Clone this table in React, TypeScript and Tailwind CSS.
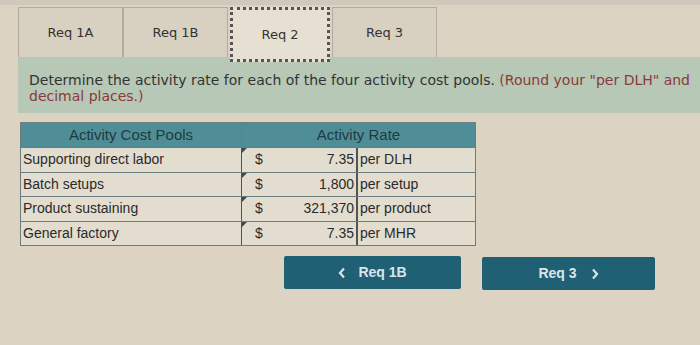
import React from "react";

const rows = [
  { pool: "Supporting direct labor", rate: "7.35", unit: "per DLH" },
  { pool: "Batch setups", rate: "1,800", unit: "per setup" },
  { pool: "Product sustaining", rate: "321,370", unit: "per product" },
  { pool: "General factory", rate: "7.35", unit: "per MHR" },
];

const tabs = [
  { label: "Req 1A", active: false },
  { label: "Req 1B", active: false },
  { label: "Req 2", active: true },
  { label: "Req 3", active: false },
];

export default function App() {
  return (
    <div className="w-[700px] h-[345px] overflow-hidden bg-[#dcd3c3] relative" style={{ fontFamily: "'DejaVu Sans', sans-serif" }}>
      <div className="h-[5px] bg-[#cfc8bb]" />
      {/* Tabs */}
      <div className="flex items-end pl-[18px] h-[52px]">
        {tabs.map((t) =>
          t.active ? (
            <div
              key={t.label}
              className="w-[100px] h-[55px] mx-[2px] self-start mt-[2px] bg-[#e6e0d3] border-[3px] border-dotted border-[#555] flex items-center justify-center text-[13px] text-[#333]"
            >
              {t.label}
            </div>
          ) : (
            <div
              key={t.label}
              className="w-[105px] h-[50px] bg-[#d8d0c1] border border-[#b3ab9d] border-b-0 flex items-center justify-center text-[13px] text-[#333]"
            >
              {t.label}
            </div>
          )
        )}
      </div>
      {/* Instructions */}
      <div className="ml-[18px] h-[56px] bg-[#b7c8b6] pl-[11px] pt-[15px] text-[14px] leading-[16px] text-[#333] whitespace-nowrap">
        Determine the activity rate for each of the four activity cost pools.{" "}
        <span className="text-[#8a3a3a]">(Round your "per DLH" and</span>
        <br />
        <span className="text-[#8a3a3a]">decimal places.)</span>
      </div>
      {/* Table */}
      <div className="mt-[9px] ml-[20px] w-[456px] border border-[#6d7c7e]" style={{ fontFamily: "'Liberation Sans', Arial, sans-serif" }}>
        <div className="flex h-[24px] bg-[#4f8e97] text-[#1f3a40] text-[15px]">
          <div className="w-[220px] flex items-center justify-center">Activity Cost Pools</div>
          <div className="flex-1 flex items-center justify-center border-l border-[#6d7c7e]">Activity Rate</div>
        </div>
        {rows.map((r) => (
          <div key={r.pool} className="flex h-[24.5px] border-t border-[#6d7c7e] bg-[#e3ddd0] text-[14px] text-[#2a2a2a]">
            <div className="w-[220px] flex items-center pl-[2px]">{r.pool}</div>
            <div className="w-[117px] flex items-center justify-between border-l border-r-2 border-[#4d5556] pl-[13px] pr-[2px] relative">
              <span className="absolute left-0 top-0 w-0 h-0 border-t-[5px] border-r-[5px] border-t-[#3a4d50] border-r-transparent" />
              <span>$</span>
              <span>{r.rate}</span>
            </div>
            <div className="flex-1 flex items-center pl-[2px]">{r.unit}</div>
          </div>
        ))}
      </div>
      {/* Nav buttons */}
      <div className="flex mt-[10px] ml-[284px] gap-[21px]" style={{ fontFamily: "'Liberation Sans', Arial, sans-serif" }}>
        <button className="w-[177px] h-[33px] bg-[#1f6075] rounded-[2px] text-[#dbe5e8] text-[14px] font-bold flex items-center justify-center gap-[12px]">
          <svg width="8" height="12" viewBox="0 0 8 12"><path d="M6 1.5 L2 6 L6 10.5" stroke="#dbe5e8" strokeWidth="2.2" fill="none" /></svg>
          <span>Req 1B</span>
        </button>
        <button className="w-[173px] h-[33px] bg-[#1f6075] rounded-[2px] text-[#dbe5e8] text-[14px] font-bold flex items-center justify-center gap-[14px] mt-[1px]">
          <span>Req 3</span>
          <svg width="8" height="12" viewBox="0 0 8 12"><path d="M2 1.5 L6 6 L2 10.5" stroke="#dbe5e8" strokeWidth="2.2" fill="none" /></svg>
        </button>
      </div>
    </div>
  );
}
